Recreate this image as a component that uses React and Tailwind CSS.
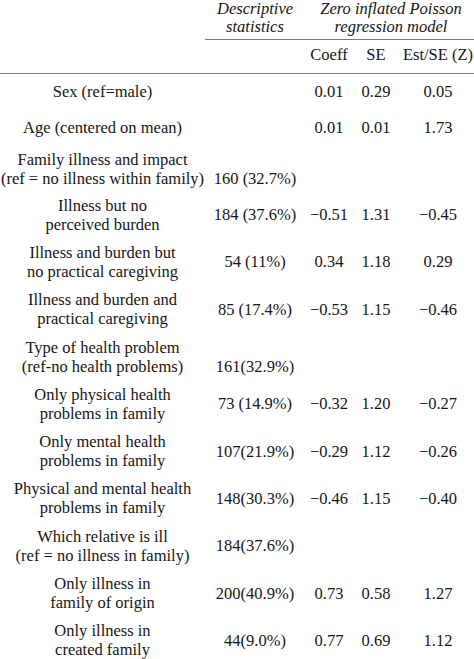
const rows = [
  { label: ['Family illness and impact', '(ref = no illness within family)'], desc: '160 (32.7%)', low: true, h: 'h-[45px]' },
  { label: ['Illness but no', 'perceived burden'], desc: '184 (37.6%)', coeff: '−0.51', se: '1.31', z: '−0.45' },
  { label: ['Illness and burden but', 'no practical caregiving'], desc: '54 (11%)', coeff: '0.34', se: '1.18', z: '0.29' },
  { label: ['Illness and burden and', 'practical caregiving'], desc: '85 (17.4%)', coeff: '−0.53', se: '1.15', z: '−0.46' },
  { label: ['Type of health problem', '(ref-no health problems)'], desc: '161(32.9%)', low: true },
  { label: ['Only physical health', 'problems in family'], desc: '73 (14.9%)', coeff: '−0.32', se: '1.20', z: '−0.27' },
  { label: ['Only mental health', 'problems in family'], desc: '107(21.9%)', coeff: '−0.29', se: '1.12', z: '−0.26' },
  { label: ['Physical and mental health', 'problems in family'], desc: '148(30.3%)', coeff: '−0.46', se: '1.15', z: '−0.40' },
  { label: ['Which relative is ill', '(ref = no illness in family)'], desc: '184(37.6%)' },
  { label: ['Only illness in', 'family of origin'], desc: '200(40.9%)', coeff: '0.73', se: '0.58', z: '1.27' },
  { label: ['Only illness in', 'created family'], desc: '44(9.0%)', coeff: '0.77', se: '0.69', z: '1.12' },
];

const grid = 'grid grid-cols-[205px_100px_48px_46px_78px]';

const Cell = ({ children, className = '' }) => (
  <div className={`flex items-center justify-center text-center whitespace-nowrap ${className}`}>{children}</div>
);

export default function App() {
  return (
    <div
      className="w-[474px] h-[659px] overflow-hidden bg-white text-[#161616] text-[16.5px]"
      style={{ fontFamily: '"Liberation Serif", "Times New Roman", serif' }}
    >
      <div className="w-[477px]">
        {/* column group header */}
        <div className={`${grid} h-[39px]`}>
          <div />
          <div className="col-span-4 grid grid-cols-[100px_172px] border-b border-[#7a7a7a] italic leading-[18px]">
            <div className="flex flex-col items-center justify-end pb-[3px] whitespace-nowrap">
              <span>Descriptive</span>
              <span>statistics</span>
            </div>
            <div className="flex flex-col items-center justify-end pb-[3px] whitespace-nowrap">
              <span>Zero inflated Poisson</span>
              <span>regression model</span>
            </div>
          </div>
        </div>

        <div className={`${grid} h-[35px] border-b border-[#7a7a7a]`}>
          <div />
          <div />
          <Cell className="pb-[2px]">Coeff</Cell>
          <Cell className="pb-[2px]">SE</Cell>
          <Cell className="pb-[2px]">Est/SE (Z)</Cell>
        </div>

        <div className={`${grid} h-[36px]`}>
          <Cell>Sex (ref=male)</Cell>
          <Cell />
          <Cell>0.01</Cell>
          <Cell>0.29</Cell>
          <Cell>0.05</Cell>
        </div>
        <div className={`${grid} h-[36px]`}>
          <Cell>Age (centered on mean)</Cell>
          <Cell />
          <Cell>0.01</Cell>
          <Cell>0.01</Cell>
          <Cell>1.73</Cell>
        </div>

        {rows.map((r) => (
          <div key={r.label[0]} className={`${grid} ${r.h || 'h-[47.3px]'} leading-[19px]`}>
            <Cell className="flex-col">
              <span>{r.label[0]}</span>
              <span>{r.label[1]}</span>
            </Cell>
            <Cell className="flex-col">
              {r.low && <span>&nbsp;</span>}
              <span>{r.desc}</span>
            </Cell>
            <Cell>{r.coeff}</Cell>
            <Cell>{r.se}</Cell>
            <Cell>{r.z}</Cell>
          </div>
        ))}
      </div>
    </div>
  );
}
